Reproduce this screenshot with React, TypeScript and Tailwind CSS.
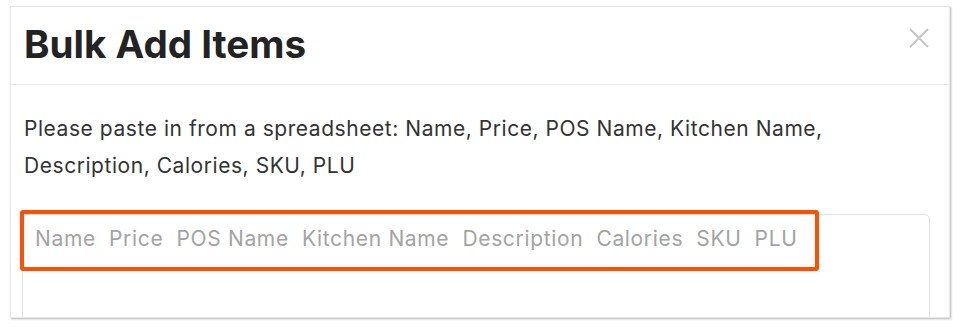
import React from 'react';

const placeholder = 'Name  Price  POS Name  Kitchen Name  Description  Calories  SKU  PLU';

const BulkAddItems = () => {
  return (
    <div className="w-[962px] h-[329px] bg-white pt-[6px] pl-[10px] font-['Inter','Liberation_Sans',sans-serif]">
      <div className="relative w-[940px] h-[312px] overflow-hidden bg-white border border-[#e8e8e8] shadow-[1px_1px_2px_rgba(0,0,0,0.3)]">
        {/* header */}
        <div className="flex items-start justify-between h-[78px] pt-[14px] pl-[13px] pr-[20px] border-b border-[#ececec]">
          <h1 className="text-[38.6px] leading-[46px] font-bold text-[#232323]">Bulk Add Items</h1>
          <button className="mt-[7px] w-[20px] h-[20px]" title="Close">
            <svg viewBox="0 0 20 20" className="w-[20px] h-[20px]" fill="none" stroke="#c6c6c6" strokeWidth="2">
              <path d="M1 1L19 19M19 1L1 19" />
            </svg>
          </button>
        </div>

        {/* body */}
        <div className="pt-[25px] pl-[13px] pr-[20px]">
          <p className="text-[21px] leading-[37px] text-[#333] tracking-[0.55px]">
            Please paste in from a spreadsheet: Name, Price, POS Name, Kitchen Name, Description, Calories, SKU, PLU
          </p>
          <div className="relative mt-[30px] -ml-[2px]">
            <textarea
              placeholder={placeholder}
              className="block w-[908px] h-[120px] resize-none rounded-[5px] border border-[#e4e4e4] pt-[11px] pl-[12px] text-[21px] leading-[25px] tracking-[0.66px] text-[#333] placeholder:text-[#a3a3a3] outline-none"
            />
            {/* highlight annotation */}
            <div className="absolute left-[-2px] top-[-4px] w-[799px] h-[61px] border-[4px] border-[#ff5000] rounded-[3px] pointer-events-none" />
          </div>
        </div>
      </div>
    </div>
  );
};

export default function App() {
  return <BulkAddItems />;
}
